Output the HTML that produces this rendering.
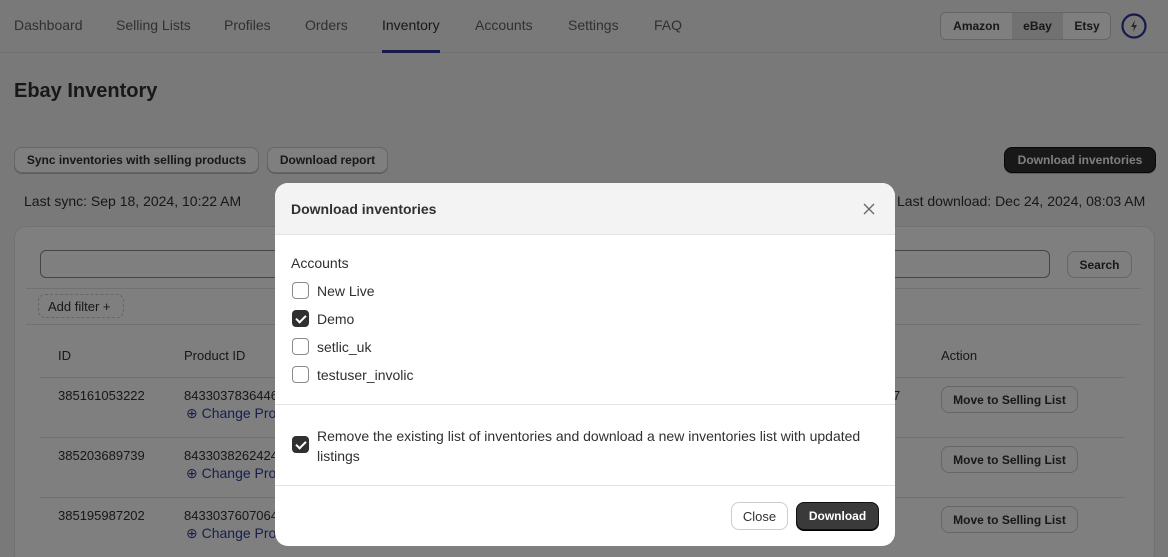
<!DOCTYPE html>
<html><head><style>
*{box-sizing:border-box;margin:0;padding:0}
html,body{width:1168px;height:557px;overflow:hidden}
body{background:#f2f2f2;font-family:"Liberation Sans",sans-serif;color:#303030;position:relative;font-size:13px}
.abs{position:absolute}
.nav{left:0;top:0;width:1168px;height:53px;background:#f2f2f2;border-bottom:1px solid #e0e0e0}
.tab{top:17px;font-size:14px;color:#616161}
.btn{position:absolute;background:#fff;border:1px solid #ccc;border-radius:8px;font-size:12px;font-weight:bold;color:#303030;display:flex;align-items:center;justify-content:center;box-shadow:0 1px 0 #bbb}
.card{left:14px;top:226px;width:1141px;height:340px;background:#fff;border-radius:12px;border:1px solid #e3e3e3}
.t{position:absolute;font-size:13px;color:#303030}
.link{position:absolute;font-size:14px;color:#2c3e9e}
.hl{position:absolute;height:1px;background:#e3e3e3}
.ov{left:0;top:0;width:1168px;height:557px;background:rgba(0,0,0,0.5)}
.modal{left:275px;top:183px;width:620px;height:363px;background:#fff;border-radius:13px;overflow:hidden}
.cb{position:absolute;width:17px;height:17px;border:1px solid #8a8a8a;border-radius:4px;background:#fff}
.cb.on{background:#303030;border-color:#303030}
.cb.on::after{content:"";position:absolute;left:5px;top:2px;width:4px;height:8px;border:solid #fff;border-width:0 2px 2px 0;transform:rotate(45deg)}
.lbl{position:absolute;font-size:14px;color:#303030}
</style></head><body>
<div class="abs nav"></div>
<div class="abs tab" style="left:14px">Dashboard</div>
<div class="abs tab" style="left:116px">Selling Lists</div>
<div class="abs tab" style="left:224px">Profiles</div>
<div class="abs tab" style="left:305px">Orders</div>
<div class="abs tab" style="left:382px;color:#303030">Inventory</div>
<div class="abs" style="left:382px;top:50px;width:58px;height:3px;background:#2e3596"></div>
<div class="abs tab" style="left:475px">Accounts</div>
<div class="abs tab" style="left:568px">Settings</div>
<div class="abs tab" style="left:654px">FAQ</div>
<div class="abs" style="left:940px;top:12px;width:171px;height:28px;border:1px solid #ccc;border-radius:6px;background:#fff;overflow:hidden;font-size:12px;font-weight:bold">
<div class="abs" style="left:0;top:0;width:71px;height:26px;display:flex;align-items:center;justify-content:center">Amazon</div>
<div class="abs" style="left:71px;top:0;width:51px;height:26px;background:#e3e3e3;display:flex;align-items:center;justify-content:center">eBay</div>
<div class="abs" style="left:122px;top:0;width:48px;height:26px;display:flex;align-items:center;justify-content:center">Etsy</div>
</div>
<svg class="abs" style="left:1120px;top:12px" width="28" height="28" viewBox="0 0 28 28"><circle cx="14" cy="14" r="11.5" fill="none" stroke="#2e3596" stroke-width="2.2"/><path d="M15 8l-4 7h3l-1 5 4-7h-3z" fill="#555"/></svg>
<div class="abs" style="left:14px;top:80px;font-size:20px;font-weight:bold;color:#303030">Ebay Inventory</div>
<div class="btn" style="left:14px;top:147px;width:245px;height:26px">Sync inventories with selling products</div>
<div class="btn" style="left:267px;top:147px;width:121px;height:26px">Download report</div>
<div class="btn" style="left:1004px;top:147px;width:152px;height:26px;background:#303030;color:#fff;border-color:#111">Download inventories</div>
<div class="t" style="left:24px;top:193px;font-size:14px">Last sync: Sep 18, 2024, 10:22 AM</div>
<div class="t" style="left:897px;top:193px;font-size:14px">Last download: Dec 24, 2024, 08:03 AM</div>
<div class="abs card" style="height:340px"></div>
<div class="abs" style="left:40px;top:250px;width:1010px;height:28px;border:1px solid #8a8a8a;border-radius:6px;background:#fff"></div>
<div class="btn" style="left:1067px;top:251px;width:65px;height:27px;box-shadow:none">Search</div>
<div class="hl" style="left:26px;top:288px;width:1115px"></div>
<div class="abs" style="left:38px;top:294px;width:86px;height:24px;border:1px dashed #ccc;border-radius:7px;font-size:13px;padding:4px 0 0 9px">Add filter +</div>
<div class="hl" style="left:26px;top:324px;width:1115px"></div>
<div class="t" style="left:58px;top:348px">ID</div>
<div class="t" style="left:184px;top:348px">Product ID</div>
<div class="t" style="left:941px;top:348px">Action</div>
<div class="hl" style="left:40px;top:377px;width:1085px"></div>
<div class="t" style="left:58px;top:388px">385161053222</div>
<div class="t" style="left:184px;top:388px">8433037836446</div>
<div class="link" style="left:186px;top:405px">⊕ Change Pro</div>
<div class="t" style="left:893px;top:388px">7</div>
<div class="btn" style="left:941px;top:386px;width:137px;height:27px;box-shadow:none">Move to Selling List</div>
<div class="hl" style="left:40px;top:437px;width:1085px"></div>
<div class="t" style="left:58px;top:448px">385203689739</div>
<div class="t" style="left:184px;top:448px">8433038262424</div>
<div class="link" style="left:186px;top:465px">⊕ Change Pro</div>
<div class="btn" style="left:941px;top:446px;width:137px;height:27px;box-shadow:none">Move to Selling List</div>
<div class="hl" style="left:40px;top:497px;width:1085px"></div>
<div class="t" style="left:58px;top:508px">385195987202</div>
<div class="t" style="left:184px;top:508px">8433037607064</div>
<div class="link" style="left:186px;top:525px">⊕ Change Pro</div>
<div class="btn" style="left:941px;top:506px;width:137px;height:27px;box-shadow:none">Move to Selling List</div>
<div class="abs ov"></div>
<div class="abs modal">
<div class="abs" style="left:0;top:0;width:620px;height:52px;background:#f3f3f3;border-bottom:1px solid #e3e3e3"></div>
<div class="abs" style="left:16px;top:18px;font-size:14px;font-weight:bold">Download inventories</div>
<svg class="abs" style="left:588px;top:20px" width="12" height="12" viewBox="0 0 12 12"><path d="M1 1L11 11M11 1L1 11" stroke="#666" stroke-width="1.3"/></svg>
<div class="lbl" style="left:16px;top:72px">Accounts</div>
<div class="cb" style="left:17px;top:99px"></div><div class="lbl" style="left:42px;top:100px">New Live</div>
<div class="cb on" style="left:17px;top:127px"></div><div class="lbl" style="left:42px;top:128px">Demo</div>
<div class="cb" style="left:17px;top:155px"></div><div class="lbl" style="left:42px;top:156px">setlic_uk</div>
<div class="cb" style="left:17px;top:183px"></div><div class="lbl" style="left:42px;top:184px">testuser_involic</div>
<div class="hl" style="left:0;top:221px;width:620px"></div>
<div class="cb on" style="left:17px;top:253px"></div>
<div class="lbl" style="left:42px;top:243px;width:560px;line-height:20px;font-size:14px">Remove the existing list of inventories and download a new inventories list with updated listings</div>
<div class="hl" style="left:0;top:302px;width:620px"></div>
<div class="btn" style="left:456px;top:319px;width:57px;height:28px;font-weight:normal;box-shadow:none;font-size:13px">Close</div>
<div class="btn" style="left:521px;top:319px;width:83px;height:28px;background:#3a3a3a;color:#fff;border-color:#111;box-shadow:0 1px 0 #000">Download</div>
</div>
</body></html>
